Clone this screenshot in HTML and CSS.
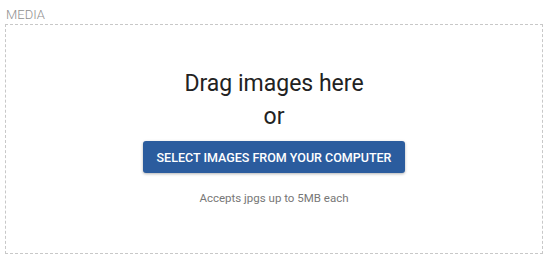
FILE: index.html
```html
<!DOCTYPE html>
<html>
<head>
  <meta charset="UTF-8">
  <link rel="stylesheet" href="styles.css">
</head>
<body>
  <div class="media-field">
    <label class="field-label">MEDIA</label>
    <div class="dropzone">
      <div class="dropzone-title">Drag images here</div>
      <div class="dropzone-or">or</div>
      <button class="select-button">Select images from your computer</button>
      <div class="dropzone-hint">Accepts jpgs up to 5MB each</div>
    </div>
  </div>
</body>
</html>
```

FILE: styles.css
```css
body {
  margin: 0;
  font-family: Roboto, "Noto Sans", sans-serif;
  background: #ffffff;
  color: #212121;
}

.media-field {
  padding: 7px 7px 10px 5px;
}

.field-label {
  display: block;
  font-size: 13px;
  line-height: 15px;
  font-weight: 300;
  color: #8f8f8f;
  padding-left: 1px;
  margin-bottom: 2px;
}

.dropzone {
  height: 230px;
  box-sizing: border-box;
  border: 1px dashed #c8c8c8;
  padding-top: 42px;
  display: flex;
  flex-direction: column;
  align-items: center;
}

.dropzone-title,
.dropzone-or {
  font-size: 23px;
  line-height: 33px;
  color: #222222;
}

.select-button {
  margin-top: 8px;
  padding: 0 14px;
  height: 32px;
  background: #2b5c9e;
  color: #ffffff;
  border: none;
  border-radius: 3px;
  font-family: Roboto, sans-serif;
  font-size: 12.5px;
  font-weight: 500;
  text-transform: uppercase;
  box-shadow: 0 1px 3px rgba(0, 0, 0, 0.3);
  cursor: pointer;
}

.dropzone-hint {
  margin-top: 18px;
  font-size: 11.5px;
  line-height: 14px;
  color: #777777;
}
```
